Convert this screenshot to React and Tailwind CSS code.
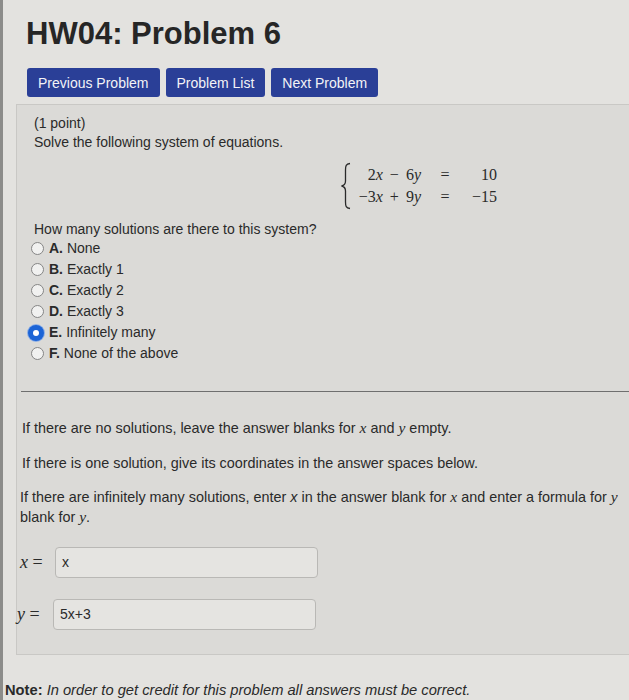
import React from "react";

function Radio({ checked }) {
  if (checked) {
    return (
      <span className="flex h-[16px] w-[16px] items-center justify-center rounded-full bg-[#1c64d6] shadow-[0_0_0_1px_#8fb0e6]">
        <span className="h-[6px] w-[6px] rounded-full bg-white" />
      </span>
    );
  }
  return <span className="block h-[13px] w-[13px] rounded-full border border-[#858585] bg-[#f1f1f0]" />;
}

const options = [
  ["A.", "None"],
  ["B.", "Exactly 1"],
  ["C.", "Exactly 2"],
  ["D.", "Exactly 3"],
  ["E.", "Infinitely many"],
  ["F.", "None of the above"],
];

function MathI({ children }) {
  return <span className="font-['Liberation_Serif','Times_New_Roman',serif] italic text-[15.5px]">{children}</span>;
}

export default function App() {
  const serif = "font-['Liberation_Serif','Times_New_Roman',serif]";
  return (
    <div className="relative h-[700px] w-[629px] overflow-hidden border-l-[3px] border-[#8c8c8a] bg-[#e3e2df] font-['Liberation_Sans',Arial,sans-serif] text-[#2a2a2a]">
      <h1 className="pl-[23px] pt-[18px] text-[31px] font-bold leading-none text-[#262626]">HW04: Problem 6</h1>

      <div className="ml-[24px] mt-[19px] flex gap-[6px]">
        {["Previous Problem", "Problem List", "Next Problem"].map((t) => (
          <button
            key={t}
            className="h-[29px] rounded-[3px] bg-[#2a3f97] px-[11px] text-[14px] leading-none text-[#f3f3f6]"
          >
            {t}
          </button>
        ))}
      </div>

      <div className="ml-[13px] mt-[7px] w-[720px] border border-r-0 border-[#c9c8c5] bg-[#dbdad7] pb-[24px] pt-[9px] text-[14px] leading-[19px]">
        <div className="pl-[17px]">
          <div>(1 point)</div>
          <div>Solve the following system of equations.</div>
        </div>

        <div className={`ml-[323px] mt-[10px] flex items-center ${serif} text-[16px] text-[#2a2a2a]`}>
          <svg width="12" height="48" viewBox="0 0 12 48" className="shrink-0">
            <path
              d="M10 1.5 C6 2 5.5 4 5.5 8 L5.5 19 C5.5 22 4 23.5 1.5 24 C4 24.5 5.5 26 5.5 29 L5.5 40 C5.5 44 6 46 10 46.5"
              fill="none"
              stroke="#2a2a2a"
              strokeWidth="1.3"
            />
          </svg>
          <div className="grid grid-cols-[69px_48px_28px] leading-[22px]">
            <div className="text-right">
              2<i>x</i>
              <span className="mx-[7px]">−</span>6<i>y</i>
            </div>
            <div className="text-center">=</div>
            <div className="text-right">10</div>
            <div className="text-right">
              −3<i>x</i>
              <span className="mx-[7px]">+</span>9<i>y</i>
            </div>
            <div className="text-center">=</div>
            <div className="text-right">−15</div>
          </div>
        </div>

        <div className="mt-[10px] pl-[17px]">How many solutions are there to this system?</div>
        <div className="-mt-[1px] pl-[14px]">
          {options.map(([l, t], i) => (
            <div key={l} className="flex h-[21px] items-center">
              <span className="flex w-[17px] items-center justify-start">
                <span className={i === 4 ? "-ml-[3px]" : ""}>
                  <Radio checked={i === 4} />
                </span>
              </span>
              <span className="ml-[1px]">
                <span className="font-semibold">{l}</span> {t}
              </span>
            </div>
          ))}
        </div>

        <div className="ml-[4px] mt-[27px] h-px bg-[#6f6f6f]" />

        <div className="pl-[5px] text-[14.4px]">
          <p className="mt-[26px] leading-[20px]">
            If there are no solutions, leave the answer blanks for <MathI>x</MathI> and <MathI>y</MathI> empty.
          </p>
          <p className="mt-[15px] leading-[20px]">If there is one solution, give its coordinates in the answer spaces below.</p>
          <p className="-ml-[2px] mt-[14px] leading-[20px]">
            <span className="whitespace-nowrap">
              If there are infinitely many solutions, enter <i>x</i> in the answer blank for <MathI>x</MathI> and enter a
              formula for <MathI>y</MathI>
            </span>
            <br />
            blank for <MathI>y</MathI>.
          </p>
        </div>

        <div className="mt-[20px] flex items-center pl-[3px]">
          <span className={`w-[35px] ${serif} text-[18px]`}>
            <i>x</i> =
          </span>
          <div className="flex h-[31px] w-[263px] items-center rounded-[4px] border border-[#b9b8b5] bg-[#e5e4e1] pl-[6px] text-[14px]">
            x
          </div>
        </div>
        <div className="mt-[21px] flex items-center pl-[0px]">
          <span className={`w-[36px] ${serif} text-[18px]`}>
            <i>y</i> =
          </span>
          <div className="flex h-[31px] w-[263px] items-center rounded-[4px] border border-[#b9b8b5] bg-[#e5e4e1] pl-[6px] text-[14px]">
            5x+3
          </div>
        </div>
      </div>

      <div className="mt-[25px] pl-[2px] text-[14.7px] leading-[20px]">
        <b>Note:</b> <i>In order to get credit for this problem all answers must be correct.</i>
      </div>
    </div>
  );
}
